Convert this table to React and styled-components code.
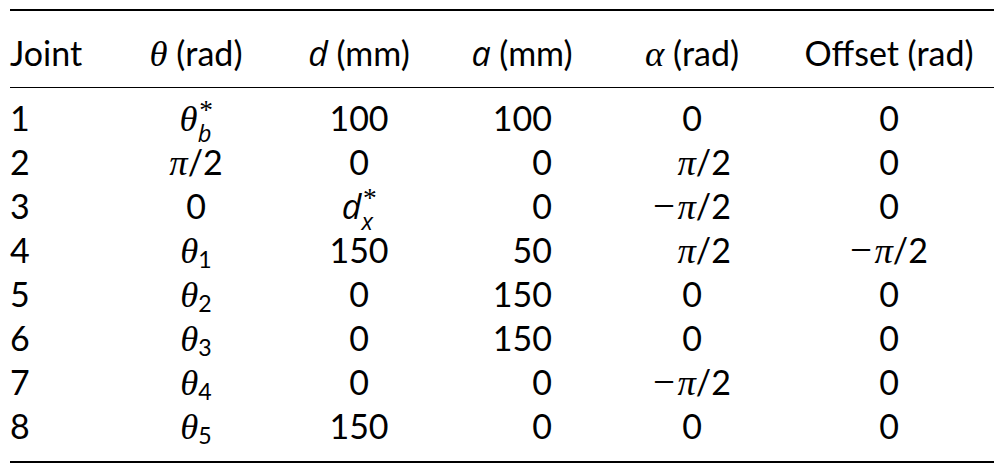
import React from 'react'
import styled, {createGlobalStyle} from 'styled-components'

const GlobalStyle = createGlobalStyle`
  html, body {
    margin: 0;
    background: #fff;
  }
  body {
    font-family: Lato, "Open Sans", sans-serif;
    color: #000;
  }
`

const Page = styled.div`
  padding: 9px 0 0 10px;
`

const Table = styled.div`
  border-top: 2px solid #000;
  border-bottom: 2px solid #000;
`

const Row = styled.div`
  display: grid;
  grid-template-columns: 120px 132px 194px 132px 208px 186px 1fr;
  grid-auto-rows: 44px;
  font-size: 34px;
  line-height: 44px;
  white-space: nowrap;
`

const HeadRow = styled(Row)`
  padding: 20px 0 12px;
  border-bottom: 1.5px solid #000;
`

const Body = styled.div`
  padding: 8px 0 13px;
`

const Cell = styled.div`
  text-align: ${p => p.$align || 'center'};
  padding-right: ${p => p.$pr || 0}px;
`

// math italic (theta, alpha, pi)
const M = styled.span`
  font-family: "Liberation Serif", "DejaVu Serif", serif;
  font-style: italic;
  font-size: 1.08em;
`

// upright math operator (minus)
const Op = styled.span`
  font-family: "Liberation Serif", "DejaVu Serif", serif;
  font-size: 1.15em;
  margin-right: 0.06em;
`

// sans italic variable (d, a, b, x)
const V = styled.span`
  font-style: italic;
  font-family: "Open Sans", Lato, sans-serif;
`

const Phantom = styled.span`
  visibility: hidden;
`

const Sub = styled.span`
  font-size: 0.68em;
  line-height: 0;
  position: relative;
  top: 0.22em;
`

// stacked super/subscript pair, kept out of the line box height
const Scripts = styled.span`
  display: inline-block;
  position: relative;
  font-size: 0.7em;
  width: 0.62em;
  height: 0.7em;
  line-height: 1;
  text-align: left;
`

const Hi = styled.span`
  position: absolute;
  left: 0.06em;
  top: -0.62em;
  font-family: "Liberation Serif", serif;
  font-size: 1.15em;
`

const Lo = styled.span`
  position: absolute;
  left: 0;
  top: 0.34em;
`

const Minus = () => <Op>−</Op>
const Pi2 = ({neg, pad}) => (
  <>
    {neg ? <Minus /> : pad ? <Phantom><Minus /></Phantom> : null}
    <M>π</M>/2
  </>
)
const Theta = ({sub}) => (
  <>
    <M>θ</M>
    <Sub>{sub}</Sub>
  </>
)
const Starred = ({children, sub}) => (
  <>
    {children}
    <Scripts>
      <Hi>*</Hi>
      <Lo><V>{sub}</V></Lo>
    </Scripts>
  </>
)

const rows = [
  ['1', <Starred sub="b"><M>θ</M></Starred>, '100', '100', '0', '0'],
  ['2', <Pi2 />, '0', '0', <Pi2 pad />, '0'],
  ['3', '0', <Starred sub="x"><V>d</V></Starred>, '0', <Pi2 neg />, '0'],
  ['4', <Theta sub="1" />, '150', '50', <Pi2 pad />, <Pi2 neg />],
  ['5', <Theta sub="2" />, '0', '150', '0', '0'],
  ['6', <Theta sub="3" />, '0', '150', '0', '0'],
  ['7', <Theta sub="4" />, '0', '0', <Pi2 neg />, '0'],
  ['8', <Theta sub="5" />, '150', '0', '0', '0'],
]

export default function App() {
  return (
    <Page>
      <GlobalStyle />
      <Table>
        <HeadRow>
          <Cell $align='left'>Joint</Cell>
          <Cell><M>θ</M> (rad)</Cell>
          <Cell><V>d</V> (mm)</Cell>
          <Cell><V>a</V> (mm)</Cell>
          <Cell><M>α</M> (rad)</Cell>
          <Cell>Offset (rad)</Cell>
          <Cell />
        </HeadRow>
        <Body>
          {rows.map(([joint, theta, d, a, alpha, offset]) => (
            <Row key={joint}>
              <Cell $align='left'>{joint}</Cell>
              <Cell>{theta}</Cell>
              <Cell>{d}</Cell>
              <Cell $align='right' $pr={36}>{a}</Cell>
              <Cell>{alpha}</Cell>
              <Cell>{offset}</Cell>
              <Cell />
            </Row>
          ))}
        </Body>
      </Table>
    </Page>
  )
}
